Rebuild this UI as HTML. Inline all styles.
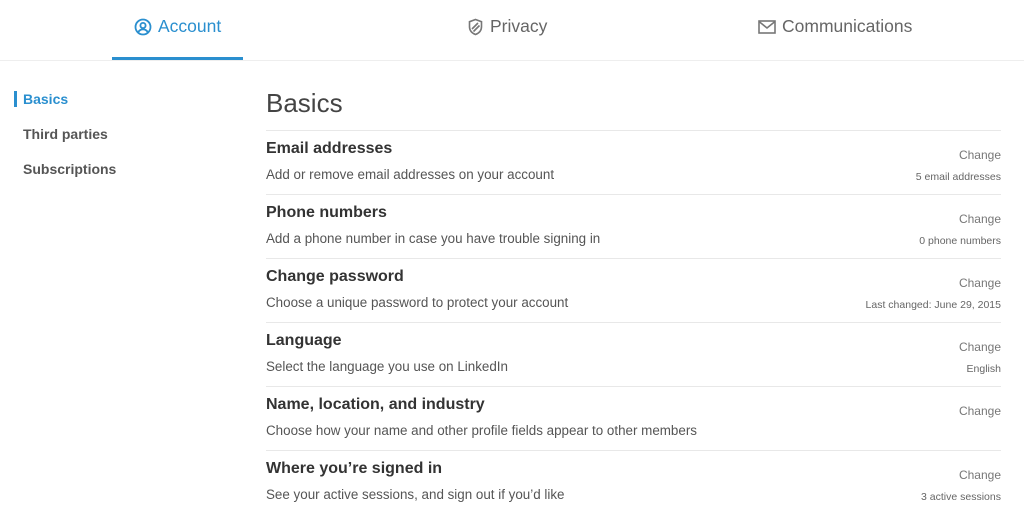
<!DOCTYPE html>
<html><head><style>
*{margin:0;padding:0;box-sizing:border-box}
body{width:1024px;height:511px;background:#fff;font-family:"Liberation Sans",sans-serif;position:relative;overflow:hidden;color:#333}
.tabs{position:absolute;top:0;left:0;width:1024px;height:61px;border-bottom:1px solid #eee}
.tab{position:absolute;top:16px;font-size:17.5px;color:#666;display:flex;align-items:center;gap:6px;white-space:nowrap}
.ul{position:absolute;left:112px;top:57px;width:131px;height:3px;background:#2a8fcf}
.side{position:absolute;left:23px;font-size:14px;font-weight:bold;color:#555}
.bar{position:absolute;left:14px;top:91px;width:3px;height:16px;background:#2a8fcf}
h1{position:absolute;left:266px;top:88px;font-size:26px;font-weight:normal;color:#444}
.row{position:absolute;left:266px;width:735px;height:64px;border-top:1px solid #e8e8e8}
.t{position:absolute;left:0;top:9px;font-size:16px;font-weight:bold;color:#333}
.d{position:absolute;left:0;top:36px;font-size:13.4px;color:#555}
.c{position:absolute;right:0;top:17px;font-size:12px;color:#777}
.s{position:absolute;right:0;top:40px;font-size:10.5px;color:#666}
</style></head><body>
<div class="tabs">
<div class="tab" style="left:134px;color:#2a8fcf"><svg width="18" height="18" viewBox="0 0 18 18" fill="none" stroke="#2a8fcf" stroke-width="1.8"><circle cx="9" cy="9" r="7.5"/><circle cx="9" cy="7.5" r="2.6"/><path d="M4.2 14.3c1.2-2.2 2.8-3 4.8-3s3.6.8 4.8 3"/></svg>Account</div>
<div class="tab" style="left:467px"><svg width="17" height="18" viewBox="0 0 17 18" fill="none" stroke="#777" stroke-width="1.6"><path d="M8.5 1.5l6 2.2v5c0 4-3 6.6-6 7.8-3-1.2-6-3.8-6-7.8v-5z"/><path d="M5 11l6-6M6.5 13.5l6-6"/></svg>Privacy</div>
<div class="tab" style="left:758px"><svg width="18" height="14" viewBox="0 0 18 14" fill="none" stroke="#777" stroke-width="1.6"><rect x="1" y="1" width="16" height="12"/><path d="M1 1.5l8 6.5 8-6.5"/></svg>Communications</div>
<div class="ul"></div>
</div>
<div class="bar"></div>
<div class="side" style="top:91px;color:#2a8fcf">Basics</div>
<div class="side" style="top:126px">Third parties</div>
<div class="side" style="top:161px">Subscriptions</div>
<h1>Basics</h1>
<div class="row" style="top:130px"><div class="t">Email addresses</div><div class="d">Add or remove email addresses on your account</div><div class="c">Change</div><div class="s">5 email addresses</div></div>
<div class="row" style="top:194px"><div class="t">Phone numbers</div><div class="d">Add a phone number in case you have trouble signing in</div><div class="c">Change</div><div class="s">0 phone numbers</div></div>
<div class="row" style="top:258px"><div class="t">Change password</div><div class="d">Choose a unique password to protect your account</div><div class="c">Change</div><div class="s">Last changed: June 29, 2015</div></div>
<div class="row" style="top:322px"><div class="t">Language</div><div class="d">Select the language you use on LinkedIn</div><div class="c">Change</div><div class="s">English</div></div>
<div class="row" style="top:386px"><div class="t">Name, location, and industry</div><div class="d">Choose how your name and other profile fields appear to other members</div><div class="c">Change</div></div>
<div class="row" style="top:450px"><div class="t">Where you’re signed in</div><div class="d">See your active sessions, and sign out if you’d like</div><div class="c">Change</div><div class="s">3 active sessions</div></div>
</body></html>
